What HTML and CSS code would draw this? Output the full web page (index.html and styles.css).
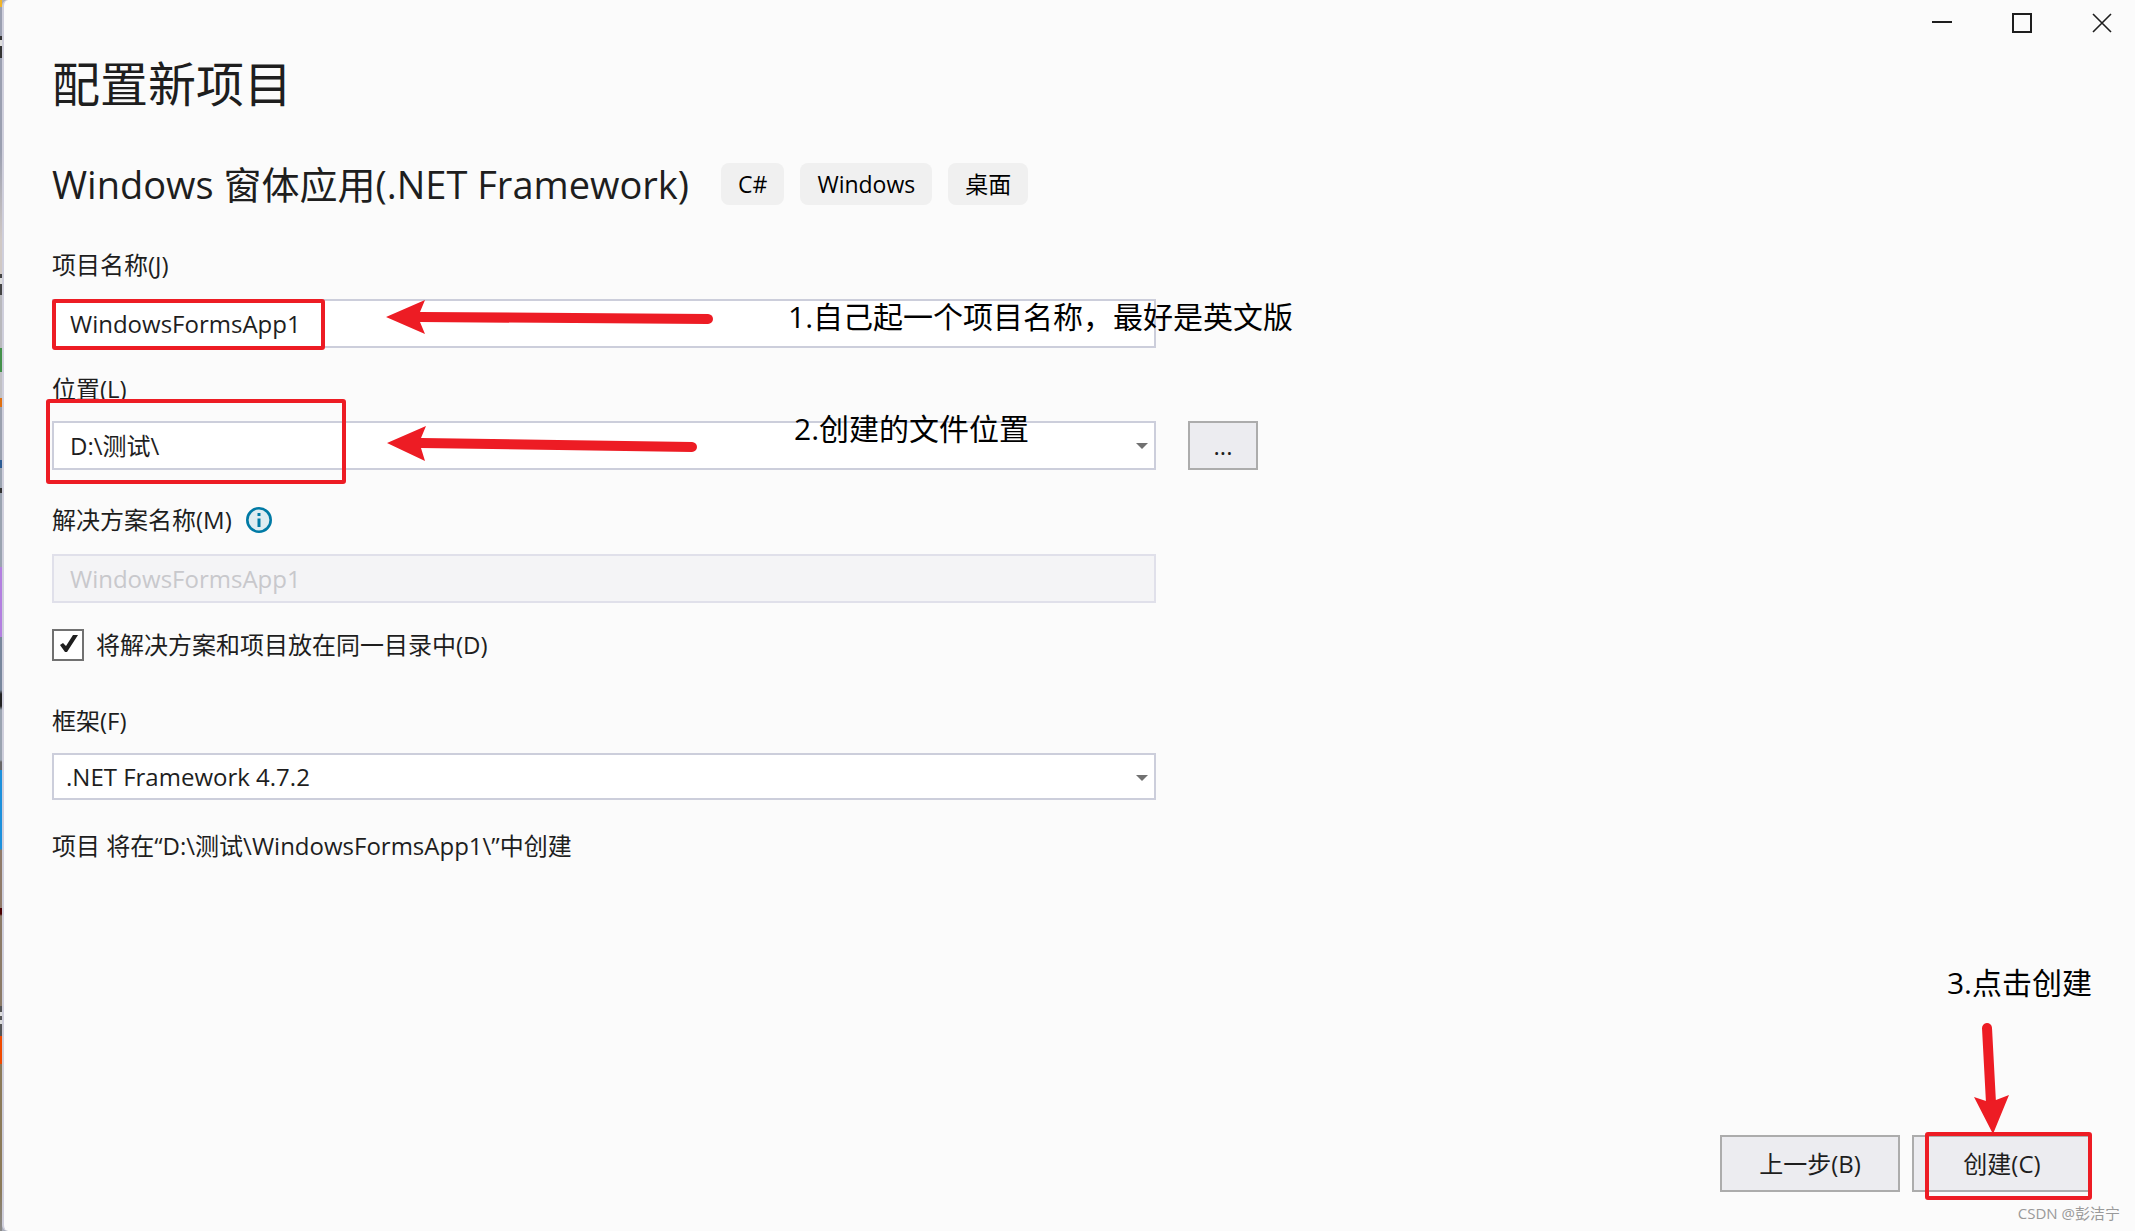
FILE: index.html
```html
<!DOCTYPE html>
<html lang="zh-CN">

<head>
  <meta charset="UTF-8">
  <meta name="viewport" content="width=device-width, initial-scale=1.0">
  <title>配置新项目</title>
  <link rel="stylesheet" href="styles.css">
</head>

<body>

  <div class="desktop-edge"></div>

  <div class="window">
    <div class="title-bar">
      <button type="button" class="window-btn" aria-label="最小化">
        <svg width="20" height="20" viewBox="0 0 20 20"><path d="M0 9H20" /></svg>
      </button>
      <button type="button" class="window-btn" aria-label="最大化">
        <svg width="20" height="20" viewBox="0 0 20 20"><path d="M1 1H19V19H1Z" /></svg>
      </button>
      <button type="button" class="window-btn" aria-label="关闭">
        <svg class="close" width="20" height="20" viewBox="0 0 20 20"><path d="M1 1L19 19M19 1L1 19" /></svg>
      </button>
    </div>

    <form class="content">
      <h1>配置新项目</h1>

      <div class="template">
        <h2>Windows 窗体应用(.NET Framework)</h2>
        <ul class="tags">
          <li>C#</li>
          <li>Windows</li>
          <li>桌面</li>
        </ul>
      </div>

      <div class="field project-name">
        <label for="projectName">项目名称(J)</label>
        <div class="control">
          <input type="text" class="box" id="projectName" value="WindowsFormsApp1">
          <div class="mark mark-name"></div>
          <svg class="arrow arrow-left" width="330" height="36" viewBox="0 0 330 36">
            <path class="shaft" d="M34 18L322 20" />
            <path d="M0 18L39 1L34 13V23L39 35Z" />
          </svg>
          <span class="note note-name">1.自己起一个项目名称，最好是英文版</span>
        </div>
      </div>

      <div class="field location">
        <label for="location">位置(L)</label>
        <div class="location-row">
          <div class="control drop-down">
            <select class="box" id="location">
              <option>D:\测试\</option>
            </select>
            <div class="mark mark-location"></div>
            <svg class="arrow arrow-left" width="330" height="42" viewBox="0 0 330 42">
              <path class="shaft" d="M35 22L306 26" />
              <path d="M1 22L40 5L35 17V27L39 40Z" />
            </svg>
            <span class="note note-location">2.创建的文件位置</span>
          </div>
          <button type="button" class="btn browse-btn">...</button>
        </div>
      </div>

      <div class="field solution">
        <div class="label-row">
          <label for="solutionName">解决方案名称(M)</label>
          <svg class="info" width="26" height="26" viewBox="0 0 26 26">
            <circle cx="13" cy="13" r="11.700" />
            <path d="M13 11.500V20M13 6V9" />
          </svg>
        </div>
        <div class="control">
          <input type="text" class="box" id="solutionName" value="WindowsFormsApp1" disabled>
        </div>
      </div>

      <div class="same-dir">
        <span class="check">
          <input type="checkbox" id="sameDir" checked>
          <svg width="18" height="18" viewBox="0 0 18 18">
            <path d="M0 10L3 8L6 11L13 0H18L7 17H5Z" />
          </svg>
        </span>
        <label for="sameDir">将解决方案和项目放在同一目录中(D)</label>
      </div>

      <div class="field framework">
        <label for="framework">框架(F)</label>
        <div class="control drop-down">
          <select class="box" id="framework">
            <option>.NET Framework 4.7.2</option>
          </select>
        </div>
      </div>

      <p class="summary">项目 将在“D:\测试\WindowsFormsApp1\”中创建</p>

      <div class="footer">
        <button type="button" class="btn step-btn">上一步(B)</button>
        <div class="create">
          <button type="submit" class="btn step-btn">创建(C)</button>
          <div class="mark mark-create"></div>
          <svg class="arrow arrow-down" width="36" height="118" viewBox="0 0 36 118">
            <path class="shaft" d="M14 11L18 86" />
            <path d="M20 117L1 80L13 84L23 83L36 78Z" />
          </svg>
          <span class="note note-create">3.点击创建</span>
        </div>
      </div>
    </form>

    <span class="watermark">CSDN @彭洁宁</span>
  </div>

</body>

</html>
```
FILE: styles.css
```css
* {
  box-sizing: border-box;
}

body {
  margin: 0;
  display: flex;
  min-height: 100vh;
  background: #a9adb9;
  font-family: "Open Sans", "Noto Sans CJK SC", sans-serif;
  font-size: 24px;
  line-height: 32px;
  color: #1e1e1e;
}

h1, h2, p, ul {
  margin: 0;
  padding: 0;
  font-weight: normal;
}

input, select, button {
  font: inherit;
  color: inherit;
}

/* strip of the desktop left of the window */
.desktop-edge {
  width: 2px;
  background: linear-gradient(
    #f0b429 0 7px, #9a9fb0 7px 36px, #333 36px 40px, #ddd 40px 46px,
    #333 46px 58px, #9a9fb0 58px 150px, #d0c8c4 240px 274px,
    #444 274px 278px, #ddd 278px 284px, #444 284px 295px,
    #b8b8bc 295px 348px, #43914a 348px 372px, #c0c0c4 372px 398px,
    #e07010 398px 407px, #9aa0ae 407px 460px, #2b5c94 460px 468px,
    #9aa3b0 468px 488px, #333 488px 493px, #9aa3b0 493px 567px,
    #b37fe0 567px 637px, #78879c 637px 690px, #222 694px 706px,
    #9aa3b0 710px 760px, #666 762px 770px, #1b90dc 770px 849px,
    #8f7a68 850px 908px, #4a0000 908px 914px, #8b7a66 916px 1006px,
    #555 1006px 1012px, #ddd 1012px 1016px, #555 1016px 1020px,
    #ddd 1020px 1024px, #555 1024px 1036px, #f04a00 1036px 1064px,
    #8b7a58 1064px 1190px, #8a8a8a
  );
}

.window {
  position: relative;
  flex: 1;
  display: flex;
  flex-direction: column;
  border-left: 2px solid #cfcfdc;
  border-radius: 6px 0 0 6px;
  background: #fbfbfb;
}

.title-bar {
  display: flex;
  justify-content: flex-end;
  gap: 14px;
}

.window-btn {
  display: flex;
  justify-content: center;
  align-items: center;
  width: 66px;
  height: 46px;
  padding: 0;
  border: none;
  background: none;
}

.window-btn svg {
  fill: none;
  stroke: #1e1e1e;
  stroke-width: 2;
}

.window-btn .close {
  stroke-width: 1.6;
}

.content {
  flex: 1;
  display: flex;
  flex-direction: column;
  padding: 6px 43px 39px 48px;
}

h1 {
  font-size: 48px;
  line-height: 64px;
}

.template {
  display: flex;
  align-items: center;
  gap: 32px;
  margin: 44px 0 41px;
}

h2 {
  font-size: 38px;
  line-height: 48px;
}

.tags {
  display: flex;
  gap: 16px;
  list-style: none;
  font-size: 23px;
  line-height: 42px;
  color: #000;
}

.tags li {
  padding: 0 17px;
  border-radius: 8px;
  background: #f0f0f0;
}

.field {
  display: flex;
  flex-direction: column;
  gap: 16px;
}

.project-name {
  gap: 18px;
  margin-bottom: 25px;
}

.location {
  margin-bottom: 34px;
}

.solution {
  gap: 18px;
  margin-bottom: 26px;
}

.control {
  position: relative;
  width: 100%;
  max-width: 1104px;
}

.box {
  display: block;
  width: 100%;
  height: 49px;
  padding: 0 16px;
  border: 2px solid #cccedb;
  border-radius: 0;
  background: #fff;
  appearance: none;
  outline: none;
}

.box:disabled {
  border-color: #e0e0ea;
  background: #f4f4f6;
  color: #c8c8cc;
  opacity: 1;
}

.drop-down::after {
  content: "";
  position: absolute;
  right: 8px;
  top: 22px;
  border: 6px solid transparent;
  border-top-color: #717171;
  border-bottom: none;
  pointer-events: none;
}

.location-row {
  display: flex;
  gap: 32px;
}

.label-row {
  display: flex;
  align-items: center;
  gap: 14px;
}

.info circle {
  fill: #deecf1;
  stroke: #007aa5;
  stroke-width: 2.6;
}

.info path {
  stroke: #007aa5;
  stroke-width: 3;
}

.same-dir {
  display: flex;
  align-items: center;
  gap: 12px;
  margin-bottom: 44px;
}

.check {
  position: relative;
  display: flex;
}

.check input {
  width: 32px;
  height: 32px;
  margin: 0;
  border: 2px solid #717171;
  background: #fff;
  appearance: none;
}

.check svg {
  position: absolute;
  left: 8px;
  top: 6px;
  fill: #1e1e1e;
  pointer-events: none;
}

.check input:not(:checked) + svg {
  display: none;
}

.framework {
  margin-bottom: 30px;
}

.framework .box {
  height: 47px;
  padding: 0 12px;
}

.btn {
  border: 2px solid #acacac;
  background: #ececf0;
}

.browse-btn {
  width: 70px;
  flex-shrink: 0;
  padding: 0;
}

.footer {
  display: flex;
  justify-content: flex-end;
  gap: 12px;
  margin-top: auto;
}

.create {
  position: relative;
}

.step-btn {
  display: block;
  width: 180px;
  height: 57px;
}

/* red marks and notes drawn over the form */
.mark, .arrow, .note {
  position: absolute;
  pointer-events: none;
}

.mark {
  border: 4px solid #ed1c24;
  border-radius: 3px;
}

.mark-name {
  left: 0;
  top: 0;
  width: 273px;
  height: 51px;
}

.mark-location {
  left: -6px;
  top: -22px;
  width: 300px;
  height: 85px;
}

.mark-create {
  right: 0;
  top: -3px;
  width: 167px;
  height: 68px;
}

.arrow {
  fill: #ed1c24;
}

.shaft {
  stroke: #ed1c24;
  stroke-width: 10;
  stroke-linecap: round;
}

.arrow-left {
  left: 334px;
  top: 0;
}

.arrow-down {
  right: 83px;
  top: -118px;
}

.note {
  font-size: 30px;
  line-height: 40px;
  white-space: nowrap;
  color: #000;
}

.note-name {
  left: 736px;
  top: -2px;
}

.note-location {
  left: 742px;
  top: -12px;
}

.note-create {
  right: 0;
  top: -172px;
}

.watermark {
  position: absolute;
  right: 15px;
  bottom: 8px;
  font-size: 15px;
  line-height: 20px;
  color: #999;
}
```
